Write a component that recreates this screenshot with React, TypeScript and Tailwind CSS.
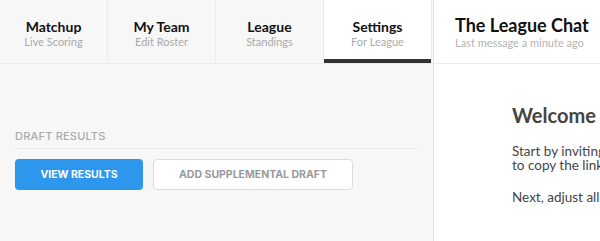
const tabs = [
  { title: "Matchup", sub: "Live Scoring" },
  { title: "My Team", sub: "Edit Roster" },
  { title: "League", sub: "Standings" },
  { title: "Settings", sub: "For League", active: true },
];

export default function App() {
  return (
    <div className="flex h-[241px] w-[600px] overflow-hidden bg-[#f7f7f7] font-['Lato',sans-serif]">
      <div className="flex w-[433px] shrink-0 flex-col">
        <div className="flex h-[64px] border-b border-[#ebebeb]">
          {tabs.map((t) => (
            <div
              key={t.title}
              className={`relative flex w-[108px] shrink-0 flex-col items-center justify-center border-r border-[#ebebeb] pt-[3px] ${t.active ? "bg-white" : ""}`}
            >
              <div className="text-[14px] font-bold leading-[17px] text-[#111]">{t.title}</div>
              <div className="text-[11px] leading-[13px] text-[#aaa]">{t.sub}</div>
              {t.active && <div className="absolute bottom-0 left-0 right-0 h-[4px] bg-[#333]" />}
            </div>
          ))}
        </div>
        <div className="px-[15px] pt-[66px]">
          <div className="border-b border-[#e6e6e6] pb-[5px] text-[11px] font-medium uppercase leading-[13px] tracking-[0.2px] text-[#aaa] font-['Inter',sans-serif]">
            Draft Results
          </div>
          <div className="mt-[10px] flex gap-[10px] font-['Inter',sans-serif]">
            <button className="h-[31px] w-[128px] rounded-[4px] bg-[#2d97ee] text-[10.5px] font-bold uppercase text-white">
              View Results
            </button>
            <button className="h-[31px] w-[200px] rounded-[4px] border border-[#dcdcdc] bg-white text-[10.5px] font-bold uppercase text-[#999]">
              Add Supplemental Draft
            </button>
          </div>
        </div>
      </div>
      <div className="flex min-w-0 flex-1 flex-col overflow-hidden border-l border-[#e4e4e4] bg-white">
        <div className="h-[64px] border-b border-[#ebebeb] pl-[21px] pt-[14px]">
          <div className="whitespace-nowrap text-[18px] font-bold leading-[22px] text-[#111]">The League Chat</div>
          <div className="whitespace-nowrap text-[11px] leading-[14px] text-[#b3b3b3]">Last message a minute ago</div>
        </div>
        <div className="pl-[78px] pt-[38px] text-[#444]">
          <div className="whitespace-nowrap text-[20px] font-bold leading-[26px]">Welcome</div>
          <div className="mt-[16px] whitespace-nowrap text-[13.5px] leading-[14px]">
            Start by inviting
            <br />
            to copy the link
          </div>
          <div className="mt-[18px] whitespace-nowrap text-[13.5px] leading-[14px]">Next, adjust all</div>
        </div>
      </div>
    </div>
  );
}
